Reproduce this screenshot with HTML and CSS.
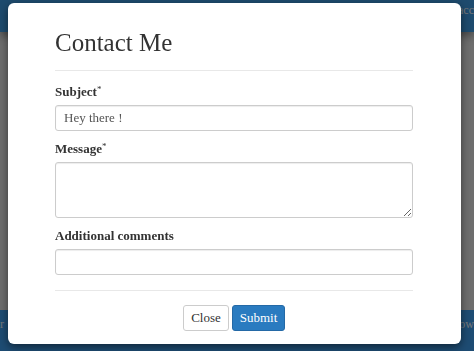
FILE: index.html
```html
<!DOCTYPE html>
<html>
<head>
<meta charset="utf-8">
<link rel="stylesheet" href="styles.css">
</head>
<body>
<div class="page">
  <header class="topbar"><span class="topbar-text">acc</span></header>
  <main class="content"></main>
  <footer class="footer"><span class="footer-left">r</span><span class="footer-right">ow</span></footer>
</div>
<div class="backdrop"></div>
<div class="modal">
  <div class="modal-header">
    <h1 class="modal-title">Contact Me</h1>
  </div>
  <form class="modal-body">
    <label class="label">Subject<sup>*</sup></label>
    <input class="input" type="text" value="Hey there !">
    <label class="label">Message<sup>*</sup></label>
    <textarea class="input textarea"></textarea>
    <label class="label">Additional comments</label>
    <input class="input" type="text">
  </form>
  <div class="modal-footer">
    <button class="btn btn-default" type="button">Close</button>
    <button class="btn btn-primary" type="button">Submit</button>
  </div>
</div>
</body>
</html>
```
FILE: styles.css
```css
html, body {
  margin: 0;
  padding: 0;
  width: 474px;
  height: 351px;
  overflow: hidden;
  font-family: "Liberation Serif", "DejaVu Serif", serif;
}
.page {
  display: flex;
  flex-direction: column;
  height: 351px;
}
.topbar {
  position: relative;
  z-index: 1;
  height: 32px;
  background: #3c96dc;
  color: #e8eef4;
  font-size: 12px;
  display: flex;
  justify-content: flex-end;
  align-items: flex-start;
  padding-top: 3px;
  box-sizing: border-box;
  box-shadow: 0 4px 8px rgba(0, 0, 0, 0.35);
}
.content {
  flex: 1;
  background: #dcdcdc;
}
.footer {
  height: 41px;
  background: #3c98e6;
  color: #e6edf4;
  font-size: 12px;
  display: flex;
  justify-content: space-between;
  align-items: flex-start;
  padding-top: 7px;
  box-sizing: border-box;
}
.backdrop {
  position: fixed;
  inset: 0;
  z-index: 10;
  background: rgba(0, 0, 0, 0.5);
}
.modal {
  position: absolute;
  z-index: 11;
  left: 8px;
  top: 3px;
  width: 453px;
  height: 341px;
  background: #fff;
  border-radius: 6px;
  box-shadow: 0 3px 9px rgba(0, 0, 0, 0.5);
  box-sizing: border-box;
  padding: 0 48px 0 47px;
  display: flex;
  flex-direction: column;
}
.modal-header {
  border-bottom: 1px solid #e8e8e8;
  padding: 24px 0 12px;
}
.modal-title {
  margin: 0;
  font-weight: normal;
  font-size: 25px;
  line-height: 31px;
  color: #333;
}
.modal-body {
  display: flex;
  flex-direction: column;
  padding-top: 13px;
  border-bottom: 1px solid #e8e8e8;
  padding-bottom: 15px;
}
.label {
  font-weight: bold;
  font-size: 13px;
  line-height: 16px;
  color: #333;
  margin-bottom: 5px;
}
.label sup {
  font-size: 9px;
  font-weight: normal;
  vertical-align: 4px;
  line-height: 0;
}
.input {
  box-sizing: border-box;
  height: 26px;
  border: 1px solid #cccccc;
  border-radius: 3px;
  padding: 0 8px;
  font-family: inherit;
  font-size: 13px;
  color: #555;
  margin: 0 0 10px;
  box-shadow: inset 0 1px 1px rgba(0,0,0,0.075);
}
.input:last-child { margin-bottom: 0; }
.textarea {
  height: 56px;
  resize: vertical;
  padding: 5px 8px;
}
.modal-footer {
  display: flex;
  justify-content: center;
  gap: 3px;
  padding-top: 14px;
}
.btn {
  box-sizing: border-box;
  height: 26px;
  font-family: inherit;
  font-size: 13px;
  border-radius: 3px;
  padding: 0;
}
.btn-default {
  width: 46px;
  background: #fff;
  color: #333;
  border: 1px solid #cccccc;
}
.btn-primary {
  width: 53px;
  background: #2a7bc0;
  color: #fff;
  border: 1px solid #2469a6;
}
```
